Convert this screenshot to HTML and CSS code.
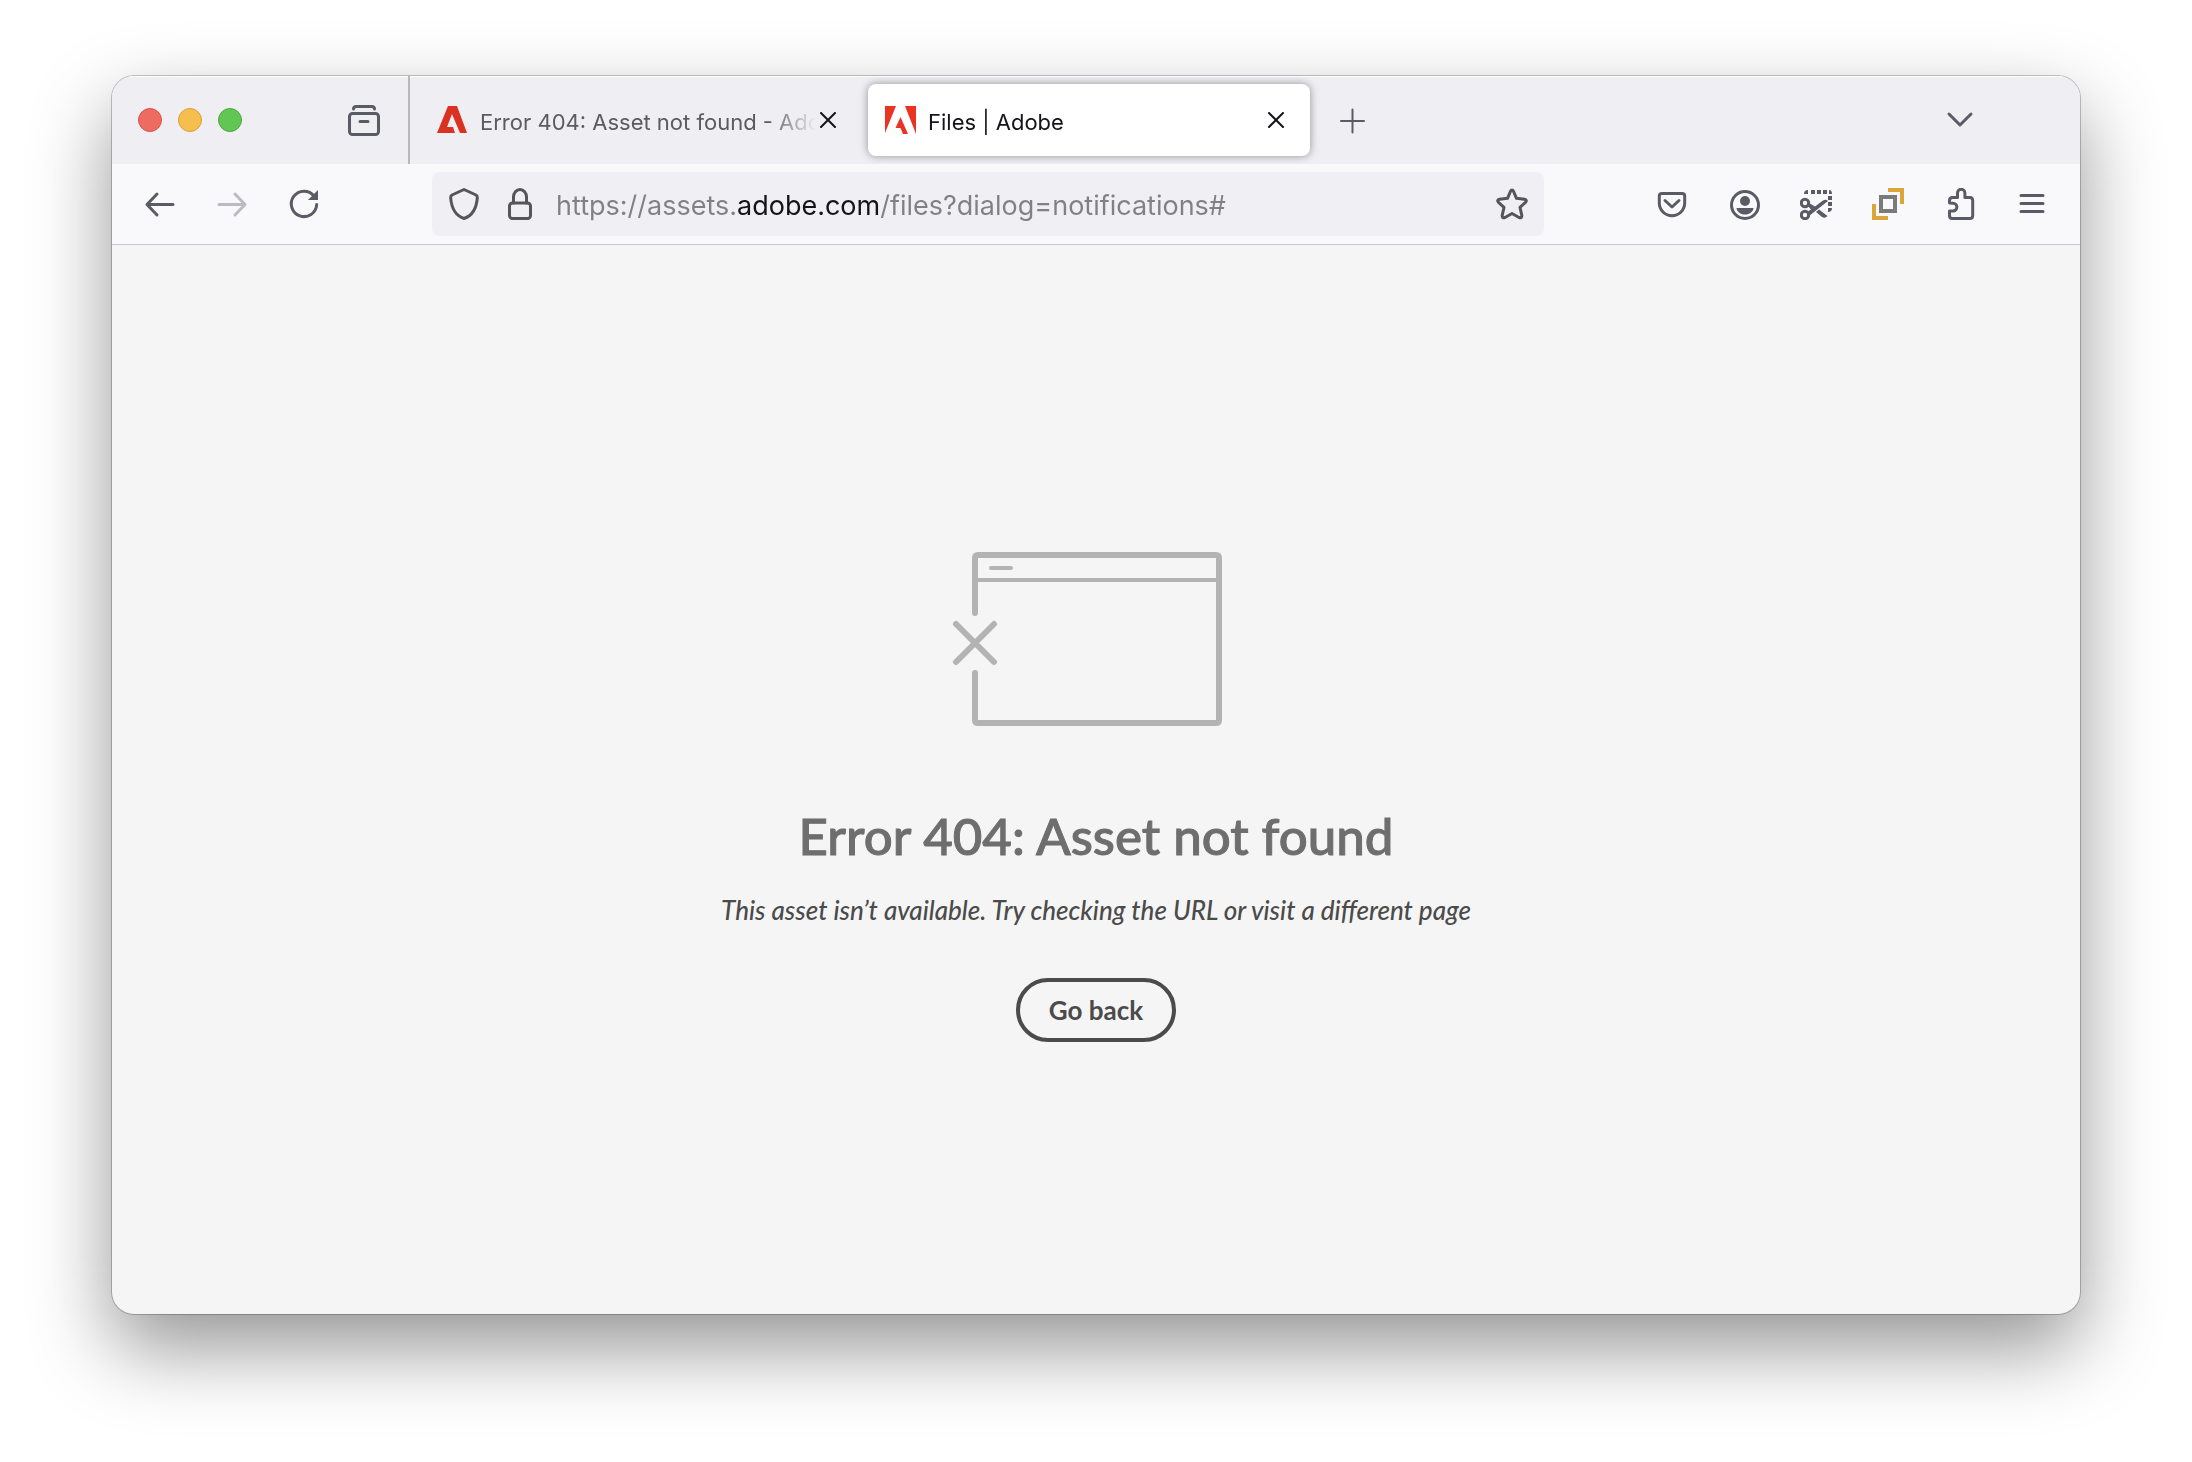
FILE: index.html
```
<!DOCTYPE html>
<html lang="en">
<head>
<meta charset="UTF-8">
<meta name="viewport" content="width=device-width, initial-scale=1.0">
<title>Files | Adobe</title>
<link rel="stylesheet" href="styles.css">
</head>
<body>
<div class="window">
    <header class="tab-bar">
        <div class="lights">
            <button class="light red" aria-label="Close window"></button>
            <button class="light yellow" aria-label="Minimize window"></button>
            <button class="light green" aria-label="Zoom window"></button>
        </div>
        <button class="icon-btn library" aria-label="Recent browsing">
            <svg class="icon" viewBox="0 0 32 32"><rect x="1.5" y="9.5" width="29" height="21" rx="3"/><path d="M5.5 5Q5.5 2.500 8.500 2.500H23.500Q26.500 2.500 26.500 5M12 17.500H20"/></svg>
        </button>
        <nav class="tabs">
            <div class="tab">
                <a class="tab-link" href="#">
                    <svg class="favicon" viewBox="0 0 31 28"><path fill="#da3120" d="M11 0L0 27H18L16 21H10L15 8L23 27H30L20 0Z"/></svg>
                    <span class="tab-title">Error 404: Asset not found - Adobe</span>
                </a>
                <button class="close" aria-label="Close tab"><svg viewBox="0 0 16 16"><path d="M1 1L15 15M15 1L1 15"/></svg></button>
            </div>
            <div class="tab active">
                <a class="tab-link" href="#">
                    <svg class="favicon" viewBox="0 0 31 28"><path fill="#eb3323" d="M0 0H11L0 27ZM20 0H31V28ZM15.500 11L23 28H18L15.500 22H10.500Z"/></svg>
                    <span class="tab-title">Files | Adobe</span>
                </a>
                <button class="close" aria-label="Close tab"><svg viewBox="0 0 16 16"><path d="M1 1L15 15M15 1L1 15"/></svg></button>
            </div>
            <button class="icon-btn" aria-label="New tab">
                <svg class="icon thin" viewBox="0 0 32 32"><path d="M5 17H28M16.500 5.500V28.500"/></svg>
            </button>
        </nav>
        <button class="icon-btn all-tabs" aria-label="List all tabs">
            <svg class="icon" viewBox="0 0 32 32"><path d="M5 10L16 21L27 10"/></svg>
        </button>
    </header>

    <div class="toolbar">
        <button class="icon-btn" aria-label="Back">
            <svg class="icon" viewBox="0 0 32 32"><path d="M29 16.500H4M13 6L3 16.500L13 27"/></svg>
        </button>
        <button class="icon-btn" aria-label="Forward" disabled>
            <svg class="icon" viewBox="0 0 32 32"><path d="M3 16.500H28M19 6L29 16.500L19 27"/></svg>
        </button>
        <button class="icon-btn" aria-label="Reload">
            <svg class="icon" viewBox="0 0 32 32"><path d="M26 8A12.700 12.700 0 1 0 28.700 16.500"/><path class="solid" d="M30 2V12H20Z"/></svg>
        </button>

        <form class="url-bar">
            <svg class="icon shield" viewBox="0 0 32 32"><path d="M16 1.500L28 7Q29.500 8 29.300 10C28.500 20 25 27.500 16 30.500C7 27.500 3.500 20 2.700 10Q2.500 8 4 7Z"/></svg>
            <svg class="icon lock" viewBox="0 0 32 32"><path d="M9.500 15V9a6.500 7.500 0 0 1 13 0V15"/><rect x="5.500" y="15" width="21" height="15.500" rx="3"/></svg>
            <input class="url" type="text" aria-label="Address" value="https://assets.adobe.com/files?dialog=notifications#">
            <button class="star" type="button" aria-label="Bookmark this page">
                <svg class="icon" viewBox="0 0 32 32"><path d="M14.400 3.500Q16 0.500 17.600 3.500L20.500 10.300L28.500 11.200Q31.500 12 29.500 14.300L24 19.300L25.800 27.300Q26 30.500 23 29.500L16 25.500L9 29.500Q6 30.500 6.200 27.300L8 19.300L2.500 14.300Q0.500 12 3.500 11.200L11.500 10.300Z"/></svg>
            </button>
        </form>

        <button class="icon-btn" aria-label="Save to Pocket">
            <svg class="icon" viewBox="0 0 32 32"><path d="M6 5.500H26Q28.700 5.500 28.700 8V15A12.700 12.700 0 0 1 3.300 15V8Q3.300 5.500 6 5.500ZM9 12.500L16 19L23 12.500"/></svg>
        </button>
        <button class="icon-btn" aria-label="Account">
            <svg class="icon" viewBox="0 0 32 32"><circle cx="17" cy="17" r="13.500"/><circle class="solid" cx="17" cy="13" r="5"/><path class="solid" d="M8.500 20H25.500C25 24 21.500 26.500 17 26.500S9 24 8.500 20Z"/></svg>
        </button>
        <button class="icon-btn" aria-label="Screenshot">
            <svg class="icon" viewBox="0 0 32 32">
                <path class="solid" d="M4 6Q4 2 8 2V6ZM11 2h4v4h-4ZM17 2h4v4h-4ZM23 2h4v4h-4ZM29 2Q32 2 32 6H29ZM28 8h4v4h-4ZM28 14h4v4h-4ZM28 20h4q0 4-4 4Z"/>
                <circle cx="5" cy="15" r="3.700"/><circle cx="5" cy="27" r="3.700"/>
                <path class="solid" d="M7 17L9 15L15 18.500L23 12.500Q26 11 28 13L9 28L7 24L11 21.500ZM16 24L19 21.500L27.500 28Q25 31 22 29Z"/>
            </svg>
        </button>
        <button class="icon-btn" aria-label="Resize extension">
            <svg class="icon resize" viewBox="0 0 32 32"><path stroke="#dba537" d="M16 2H30V16M2 16V30H16"/><rect x="9" y="9" width="14" height="14" stroke="#7b7b7b"/></svg>
        </button>
        <button class="icon-btn" aria-label="Extensions">
            <svg class="icon" viewBox="0 0 32 32"><path d="M5.500 15V12.500Q5.500 9.500 8.500 9.500H13.500V5a3.700 3.700 0 0 1 7.400 0V9.500H26Q28.700 9.500 28.700 12.500V27.500Q28.700 30.500 26 30.500H8.500Q5.500 30.500 5.500 27.500V23H9a3.900 3.900 0 0 0 0-7.800Z"/></svg>
        </button>
        <button class="icon-btn" aria-label="Open menu">
            <svg class="icon" viewBox="0 0 32 32"><path d="M5 7.500H27M5 15.500H27M5 23.500H27"/></svg>
        </button>
    </div>

    <main class="page">
        <svg class="illustration" viewBox="0 0 288 174">
            <path class="frame" d="M23 61V6Q23 3 26 3H264Q267 3 267 6V168Q267 171 264 171H26Q23 171 23 168V121"/>
            <path class="frame" d="M4 72L42 110M42 72L4 110"/>
            <path class="line" d="M25 28H265M39 16H59"/>
        </svg>
        <h1>Error 404: Asset not found</h1>
        <p>This asset isn’t available. Try checking the URL or visit a different page</p>
        <button class="go-back">Go back</button>
    </main>
</div>
</body>
</html>
```
FILE: styles.css
```
* {
    box-sizing: border-box;
}
body {
    margin: 0;
    padding: 76px 112px 148px;
    min-height: 100vh;
    display: flex;
    background-color: #fff;
    font-family: Inter, sans-serif;
}
button {
    padding: 0;
    border: none;
    background: none;
    font-family: inherit;
}
.window {
    flex: 1;
    min-width: 0;
    display: flex;
    flex-direction: column;
    border-radius: 22px;
    overflow: hidden;
    background-color: #f5f5f5;
    box-shadow: 0 0 0 1px rgba(0, 0, 0, 0.22), 0 34px 80px rgba(0, 0, 0, 0.42);
}

/* tab bar */
.tab-bar {
    height: 88px;
    display: flex;
    align-items: center;
    background-color: #efeef3;
    box-shadow: inset 0 1px 0 #fff;
}
.lights {
    display: flex;
    gap: 16px;
    padding-left: 26px;
}
.light {
    width: 24px;
    height: 24px;
    border-radius: 50%;
}
.red {
    background-color: #ed6b60;
    border: 1px solid #d85549;
}
.yellow {
    background-color: #f5bf4f;
    border: 1px solid #d9a13c;
}
.green {
    background-color: #62c655;
    border: 1px solid #50a73f;
}
.icon-btn {
    flex: none;
    width: 72px;
    height: 64px;
    display: flex;
    align-items: center;
    justify-content: center;
    color: #5b5b66;
}
.icon-btn:disabled {
    color: #bcbcc0;
}
.icon {
    flex: none;
    width: 32px;
    height: 32px;
    fill: none;
    stroke: currentColor;
    stroke-width: 3;
    stroke-linecap: round;
    stroke-linejoin: round;
}
.icon.thin {
    stroke-width: 2;
}
.icon .solid {
    fill: currentColor;
    stroke: none;
}
.icon.resize {
    stroke-width: 4;
    stroke-linecap: butt;
    stroke-linejoin: miter;
}
.library {
    margin-left: 86px;
}
.tabs {
    flex: 1;
    align-self: stretch;
    display: flex;
    align-items: center;
    gap: 6px;
    margin-left: 8px;
    padding-left: 10px;
    border-left: 2px solid #b8b8bd;
}
.tab {
    width: 442px;
    height: 72px;
    display: flex;
    align-items: center;
    padding: 0 26px 0 17px;
    border-radius: 8px;
    color: #5b5b60;
}
.tab.active {
    background-color: #fff;
    color: #15141a;
    box-shadow: 0 0 8px rgba(0, 0, 0, 0.4);
}
.tab-link {
    flex: 1;
    min-width: 0;
    display: flex;
    align-items: center;
    gap: 12px;
    color: inherit;
    text-decoration: none;
}
.favicon {
    flex: none;
    width: 31px;
    height: 28px;
}
.tab-title {
    flex: 1;
    padding-top: 3px;
    overflow: hidden;
    white-space: nowrap;
    font-size: 22px;
    line-height: 32px;
    mask-image: linear-gradient(to left, transparent, #000 48px);
}
.close {
    width: 16px;
    height: 16px;
    margin-left: 4px;
    color: #15141a;
}
.close svg {
    display: block;
    fill: none;
    stroke: currentColor;
    stroke-width: 2;
    stroke-linecap: round;
}
.all-tabs {
    margin-right: 84px;
}

/* navigation toolbar */
.toolbar {
    height: 81px;
    display: flex;
    align-items: center;
    padding: 0 12px;
    background-color: #f9f9fb;
    border-bottom: 1px solid #c9c9cd;
}
.url-bar {
    flex: 1;
    min-width: 0;
    height: 64px;
    display: flex;
    align-items: center;
    margin: 0 92px;
    padding: 0 16px;
    border-radius: 8px;
    background-color: #f0eff4;
    color: #55555a;
}
.shield {
    margin-right: 24px;
}
.lock {
    margin-right: 20px;
}
/* the host name is drawn darker than the rest of the address */
.url {
    flex: 1;
    min-width: 0;
    height: 40px;
    padding: 2px 0 0;
    border: none;
    outline: none;
    font-family: Inter, sans-serif;
    font-size: 27px;
    color: transparent;
    background-image: linear-gradient(to right, #808085 180px, #15141a 180px, #15141a 323px, #808085 323px);
    background-clip: text;
}
.star {
    height: 32px;
    color: inherit;
}

/* error page */
.page {
    flex: 1;
    display: flex;
    flex-direction: column;
    align-items: center;
    justify-content: center;
    padding-top: 34px;
    font-family: Lato, sans-serif;
}
.illustration {
    width: 288px;
    height: 174px;
    fill: none;
    stroke: #b3b3b3;
    stroke-linecap: round;
}
.frame {
    stroke-width: 6;
}
.line {
    stroke-width: 4;
}
h1 {
    margin: 78px 0 24px;
    font-size: 51px;
    font-weight: 500;
    line-height: 64px;
    color: #6e6e6e;
    -webkit-text-stroke: 1px #6e6e6e;
}
p {
    margin: 0 0 50px;
    font-size: 26px;
    font-style: italic;
    font-weight: 500;
    line-height: 36px;
    color: #4b4b4b;
}
.go-back {
    width: 160px;
    height: 64px;
    border: 4px solid #4b4b4b;
    border-radius: 32px;
    font-size: 26px;
    font-weight: bold;
    color: #4b4b4b;
}
```
